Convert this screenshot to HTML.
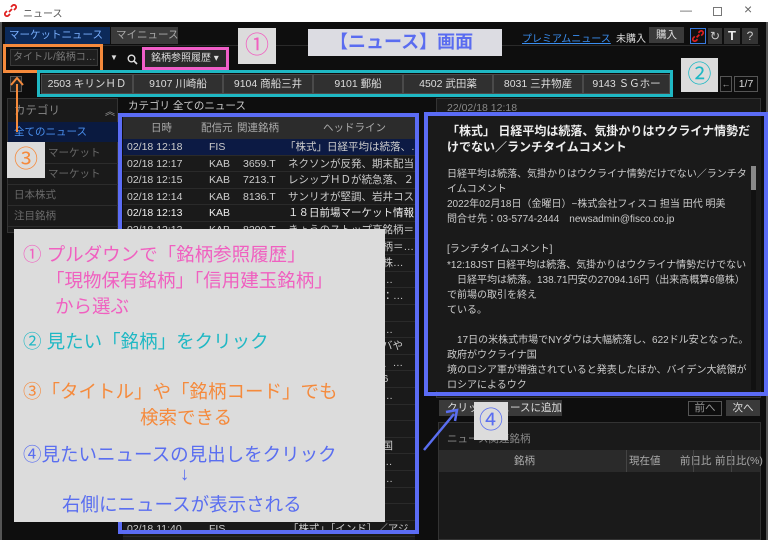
<!DOCTYPE html>
<html><head><meta charset="utf-8">
<style>
*{margin:0;padding:0;box-sizing:border-box}
body{width:768px;height:540px;overflow:hidden;background:#0e0e0e;font-family:"Liberation Sans","Noto Sans CJK JP",sans-serif;color:#c8c8c8;position:relative;font-size:11px}
.a{position:absolute;white-space:nowrap}
.cell{position:absolute;top:74px;height:20px;background:#303030;border:1px solid #4a4a4a;color:#ddd;font-size:10.5px;line-height:18px;text-align:center;overflow:hidden}
.row{position:absolute;left:123px;width:292px;height:16.6px;line-height:16px;font-size:10.5px;color:#ccc;border-bottom:1px solid #2a2a2a;background:#1a1a1a;overflow:hidden;white-space:nowrap}
.row span{position:absolute}
.cat{position:absolute;left:8px;width:110px;height:21px;border-bottom:1px solid #2c2c2c;color:#6a6a6a;font-size:10.5px;padding-left:6px;line-height:20px}
.ov{position:absolute;font-size:18.5px;white-space:nowrap}
</style></head><body>
<div class="a" style="left:0;top:0;width:768px;height:22px;background:#fff"></div>
<svg class="a" style="left:4px;top:4px" width="13" height="13" viewBox="0 0 13 13"><path d="M5 8 L8 5 M3 7 L1.5 8.5 a2 2 0 0 0 3 3 L6 10 M7 3 L8.5 1.5 a2 2 0 0 1 3 3 L10 6" stroke="#e02020" stroke-width="1.8" fill="none"/></svg>
<div class="a" style="left:23px;top:5px;font-size:10px;color:#555">ニュース</div>
<div class="a" style="left:680px;top:3px;font-size:12px;color:#666">—</div>
<div class="a" style="left:713px;top:7px;width:9px;height:9px;border:1px solid #777"></div>
<div class="a" style="left:744px;top:1px;font-size:14px;color:#666">×</div>
<div class="a" style="left:0;top:22px;width:768px;height:518px;background:#0e0e0e;border-left:2px solid #555;border-right:2px solid #555"></div>
<div class="a" style="left:5px;top:27px;width:105px;height:17px;background:#0c2a5a;color:#7ab0ff;font-size:10.5px;line-height:17px;padding-left:4px;overflow:hidden">マーケットニュース</div>
<div class="a" style="left:111px;top:27px;width:67px;height:17px;background:#3a3a3a;color:#aaa;font-size:10.5px;line-height:17px;padding-left:5px;overflow:hidden">マイニュース</div>
<div class="a" style="left:5px;top:45px;width:755px;height:1px;background:#2a2a2a"></div>
<div class="a" style="left:238px;top:28px;width:38px;height:36px;background:#dcdcdc;color:#f060c0;font-size:24px;text-align:center;line-height:36px">①</div>
<div class="a" style="left:308px;top:29px;width:194px;height:27px;background:#dcdce2;color:#5a6cf0;font-size:18px;line-height:27px;padding-left:22px;font-weight:bold">【ニュース】画面</div>
<div class="a" style="left:522px;top:30px;color:#3a8ef0;font-size:10px;text-decoration:underline">プレミアムニュース</div>
<div class="a" style="left:616px;top:30px;color:#ddd;font-size:10px">未購入</div>
<div class="a" style="left:649px;top:27px;width:35px;height:16px;background:#3a3a3a;color:#ddd;font-size:10.5px;text-align:center;line-height:16px">購入</div>
<div class="a" style="left:690px;top:28px;width:16px;height:16px;border:1px solid #3a7ae0;background:#111"></div>
<svg class="a" style="left:692px;top:30px" width="12" height="12" viewBox="0 0 13 13"><path d="M5 8 L8 5 M3 7 L1.5 8.5 a2 2 0 0 0 3 3 L6 10 M7 3 L8.5 1.5 a2 2 0 0 1 3 3 L10 6" stroke="#e02020" stroke-width="1.8" fill="none"/></svg>
<div class="a" style="left:708px;top:28px;width:14px;height:16px;background:#333;color:#ccc;font-size:12px;text-align:center;line-height:16px">↻</div>
<div class="a" style="left:724px;top:28px;width:16px;height:16px;background:#333;color:#eee;font-size:13px;font-weight:bold;text-align:center;line-height:16px">T</div>
<div class="a" style="left:742px;top:28px;width:16px;height:16px;background:#333;color:#ccc;font-size:12px;text-align:center;line-height:16px">?</div>
<div class="a" style="left:3px;top:44px;width:100px;height:29px;border:3px solid #f58a3c"></div>
<div class="a" style="left:10px;top:49px;width:88px;height:17px;background:#1e1e1e;border:1px solid #3a3a3a;color:#777;font-size:10px;line-height:15px;padding-left:2px;overflow:hidden">タイトル/銘柄コ…</div>
<div class="a" style="left:110px;top:53px;color:#ddd;font-size:8px">▼</div>
<svg class="a" style="left:127px;top:54px" width="11" height="11"><circle cx="4.5" cy="4.5" r="3.3" stroke="#ddd" stroke-width="1.4" fill="none"/><path d="M7 7 L10 10" stroke="#ddd" stroke-width="1.6"/></svg>
<div class="a" style="left:142px;top:47px;width:87px;height:23px;border:3px solid #f05ec8;background:#2a2a2a;color:#ddd;font-size:10px;line-height:17px;padding-left:6px">銘柄参照履歴 ▾</div>
<div class="a" style="left:10px;top:76px;width:12px;height:16px;border:1px solid #555;background:#222"></div>
<div class="a" style="left:37px;top:70px;width:636px;height:27px;border:3px solid #1fb8c4"></div>
<div class="cell" style="left:41px;width:92px">2503 キリンＨＤ</div>
<div class="cell" style="left:133px;width:90px">9107 川崎船</div>
<div class="cell" style="left:223px;width:90px">9104 商船三井</div>
<div class="cell" style="left:313px;width:90px">9101 郵船</div>
<div class="cell" style="left:403px;width:90px">4502 武田薬</div>
<div class="cell" style="left:493px;width:90px">8031 三井物産</div>
<div class="cell" style="left:583px;width:87px">9143 ＳＧホール…</div>
<div class="a" style="left:681px;top:58px;width:37px;height:34px;background:#dcdcdc;color:#1fb8c4;font-size:24px;text-align:center;line-height:34px">②</div>
<div class="a" style="left:720px;top:76px;width:12px;height:16px;border:1px solid #555;color:#aaa;font-size:9px;text-align:center;line-height:14px">←</div>
<div class="a" style="left:734px;top:76px;width:24px;height:16px;border:1px solid #555;color:#ddd;font-size:10.5px;text-align:center;line-height:14px">1/7</div>
<div class="a" style="left:7px;top:98px;width:111px;height:135px;background:#1a1a1a;border:1px solid #333"></div>
<div class="a" style="left:14px;top:102px;color:#888;font-size:11.5px">カテゴリ</div>
<div class="a" style="left:105px;top:103px;color:#999;font-size:10px">︽</div>
<div class="a" style="left:8px;top:122px;width:110px;height:20px;background:#0a1a40;color:#4a90f0;font-size:10.5px;padding-left:6px;line-height:20px">全てのニュース</div>
<div class="cat" style="top:143px;padding-left:40px">マーケット</div>
<div class="cat" style="top:164px;padding-left:40px">マーケット</div>
<div class="cat" style="top:185px">日本株式</div>
<div class="cat" style="top:206px">注目銘柄</div>
<div class="a" style="left:7px;top:142px;width:38px;height:36px;background:#dcdcdc;color:#f58a3c;font-size:24px;text-align:center;line-height:36px">③</div>
<div class="a" style="left:16px;top:84px;width:2px;height:48px;background:#f58a3c"></div>
<svg class="a" style="left:10px;top:76px" width="14" height="10"><path d="M1 9 L7 2 L13 9" stroke="#f58a3c" stroke-width="2" fill="none"/></svg>
<div class="a" style="left:128px;top:98px;color:#ccc;font-size:10.5px">カテゴリ 全てのニュース</div>
<div class="a" style="left:123px;top:117px;width:292px;height:423px;background:#1a1a1a"></div>
<div class="a" style="left:123px;top:117px;width:292px;height:22px;background:#2c2c2c;color:#aaa;font-size:10.5px;line-height:22px">
<span class="a" style="left:28px">日時</span><span class="a" style="left:78px">配信元</span><span class="a" style="left:114px">関連銘柄</span><span class="a" style="left:200px">ヘッドライン</span></div>
<div class="row" style="top:139px;background:#0c1a44"><span style="left:4px">02/18 12:18</span><span style="left:86px">FIS</span><span style="left:162px">「株式」日経平均は続落、…</span></div>
<div class="row" style="top:155.6px"><span style="left:4px">02/18 12:17</span><span style="left:86px">KAB</span><span style="left:120px">3659.T</span><span style="left:165px">ネクソンが反発、期末配当…</span></div>
<div class="row" style="top:172.2px"><span style="left:4px">02/18 12:15</span><span style="left:86px">KAB</span><span style="left:120px">7213.T</span><span style="left:165px">レシップＨＤが続急落、２…</span></div>
<div class="row" style="top:188.8px"><span style="left:4px">02/18 12:14</span><span style="left:86px">KAB</span><span style="left:120px">8136.T</span><span style="left:165px">サンリオが堅調、岩井コス…</span></div>
<div class="row" style="top:205.4px;color:#eee"><span style="left:4px">02/18 12:13</span><span style="left:86px">KAB</span><span style="left:165px">１８日前場マーケット情報…</span></div>
<div class="row" style="top:222px"><span style="left:4px">02/18 12:13</span><span style="left:86px">KAB</span><span style="left:120px">8200.T</span><span style="left:165px">きょうのストップ高銘柄＝…</span></div>
<div class="row" style="top:238.6px"><span style="left:165px">きょうの高値更新銘柄＝…</span></div>
<div class="row" style="top:255.2px"><span style="left:165px">国内最大級の不動産株…</span></div>
<div class="row" style="top:271.8px"><span style="left:165px">話題の注目銘柄柄＝…</span></div>
<div class="row" style="top:288.4px"><span style="left:165px">日経平均大引け形式：…</span></div>
<div class="row" style="top:305px"><span style="left:165px">新興市場でテン産…</span></div>
<div class="row" style="top:321.6px"><span style="left:165px">前場コメント　メン…</span></div>
<div class="row" style="top:338.2px"><span style="left:165px">東証マザーズ指数はバや</span></div>
<div class="row" style="top:354.8px"><span style="left:165px">前場のアジア株上海、…</span></div>
<div class="row" style="top:371.4px"><span style="left:165px">東証前引け　正午＝6</span></div>
<div class="row" style="top:388px"><span style="left:165px">日経平均は反落と続…</span></div>
<div class="row" style="top:404.6px"></div>
<div class="row" style="top:421.2px"><span style="left:165px">１２月期決算 １３…</span></div>
<div class="row" style="top:437.8px"><span style="left:165px">ドイツ国債利回債権国</span></div>
<div class="row" style="top:454.4px"><span style="left:165px">注目ストックパック…</span></div>
<div class="row" style="top:471px"><span style="left:165px">素材関連の電子製品…</span></div>
<div class="row" style="top:487.6px"><span style="left:165px">市場の見通し　油…</span></div>
<div class="row" style="top:504.2px"><span style="left:165px">日経平均の平均株…</span></div>
<div class="row" style="top:520.8px"><span style="left:4px">02/18 11:40</span><span style="left:86px">FIS</span><span style="left:165px">「株式」［インド］／アジ…</span></div>
<div class="a" style="left:118px;top:113px;width:301px;height:421px;border:4px solid #5b6cf5"></div>
<div class="a" style="left:14px;top:229px;width:371px;height:293px;background:#dcdcdc"></div>
<div class="ov" style="left:23px;top:241px;color:#f060c0">① プルダウンで「銘柄参照履歴」</div>
<div class="ov" style="left:46px;top:267px;color:#f060c0">「現物保有銘柄」「信用建玉銘柄」</div>
<div class="ov" style="left:55px;top:293px;color:#f060c0">から選ぶ</div>
<div class="ov" style="left:23px;top:328px;color:#1fb8c4">② 見たい「銘柄」をクリック</div>
<div class="ov" style="left:23px;top:378px;color:#f58a3c">③「タイトル」や「銘柄コード」でも</div>
<div class="ov" style="left:140px;top:404px;color:#f58a3c">検索できる</div>
<div class="ov" style="left:23px;top:441px;color:#5a6ef0">④見たいニュースの見出しをクリック</div>
<div class="ov" style="left:180px;top:463px;color:#5a6ef0">↓</div>
<div class="ov" style="left:62px;top:491px;color:#5a6ef0">右側にニュースが表示される</div>
<div class="a" style="left:436px;top:98px;width:325px;height:300px;background:#1a1a1a;border:1px solid #333"></div>
<div class="a" style="left:447px;top:102px;color:#888;font-size:10.5px">22/02/18 12:18</div>
<div class="a" style="left:428px;top:116px;width:333px;height:275px;background:#1a1a1a;overflow:hidden">
<div class="a" style="left:19px;top:7px;color:#eee;font-size:12px;font-weight:bold;line-height:16px;width:314px;white-space:normal">「株式」 日経平均は続落、気掛かりはウクライナ情勢だけでない／ランチタイムコメント</div>
<div class="a" style="left:19px;top:51px;color:#ccc;font-size:10px;line-height:15.1px;width:305px;white-space:nowrap">日経平均は続落、気掛かりはウクライナ情勢だけでない／ランチタ<br>イムコメント<br>2022年02月18日（金曜日）−株式会社フィスコ 担当 田代 明美<br>問合せ先：03-5774-2444　newsadmin@fisco.co.jp<br><br>[ランチタイムコメント]<br>*12:18JST 日経平均は続落、気掛かりはウクライナ情勢だけでない<br>　日経平均は続落。138.71円安の27094.16円（出来高概算6億株）<br>で前場の取引を終え<br>ている。<br><br>　17日の米株式市場でNYダウは大幅続落し、622ドル安となった。<br>政府がウクライナ国<br>境のロシア軍が増強されていると発表したほか、バイデン大統領が<br>ロシアによるウク</div>
</div>
<div class="a" style="left:751px;top:166px;width:5px;height:224px;background:#111"></div>
<div class="a" style="left:751px;top:166px;width:5px;height:24px;background:#888"></div>
<div class="a" style="left:424px;top:112px;width:344px;height:284px;border:4px solid #5b6cf5"></div>
<div class="a" style="left:439px;top:400px;width:123px;height:16px;background:#3a3a3a;color:#ddd;font-size:10.5px;line-height:16px;padding-left:8px">クリップニュースに追加</div>
<div class="a" style="left:688px;top:401px;width:34px;height:15px;border:1px solid #555;color:#999;font-size:10.5px;text-align:center;line-height:13px">前へ</div>
<div class="a" style="left:726px;top:400px;width:34px;height:16px;background:#3a3a3a;color:#ddd;font-size:10.5px;text-align:center;line-height:16px">次へ</div>
<div class="a" style="left:438px;top:422px;width:323px;height:118px;background:#1a1a1a;border:1px solid #333"></div>
<div class="a" style="left:447px;top:431px;color:#888;font-size:10.5px">ニュース関連銘柄</div>
<div class="a" style="left:439px;top:450px;width:321px;height:22px;background:#2a2a2a;color:#aaa;font-size:10.5px;line-height:22px">
<span class="a" style="left:75px">銘柄</span><span class="a" style="left:190px">現在値</span><span class="a" style="left:241px">前日比</span><span class="a" style="left:276px">前日比(%)</span></div>
<div class="a" style="left:626px;top:450px;width:1px;height:22px;background:#444"></div>
<div class="a" style="left:693px;top:450px;width:1px;height:22px;background:#444"></div>
<div class="a" style="left:731px;top:450px;width:1px;height:22px;background:#444"></div>
<div class="a" style="left:474px;top:402px;width:34px;height:38px;background:#dcdcdc;color:#5a6ef0;font-size:24px;text-align:center;line-height:38px">④</div>
<svg class="a" style="left:420px;top:402px" width="45" height="52"><path d="M4 48 L34 12" stroke="#5a6ef0" stroke-width="2.5"/><path d="M26 10 L37 8 L35 19" stroke="#5a6ef0" stroke-width="2.5" fill="none"/></svg>
</body></html>
